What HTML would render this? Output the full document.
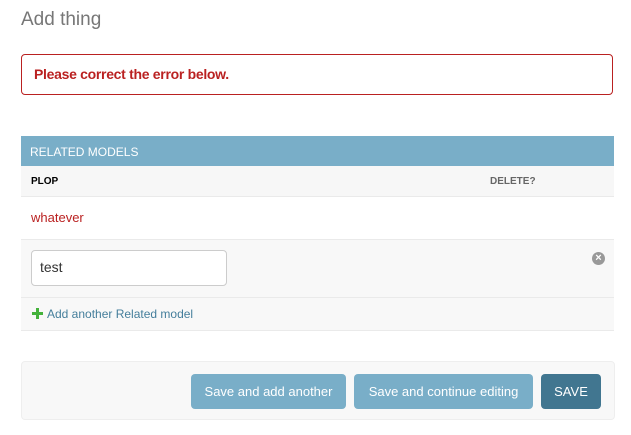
<!DOCTYPE html><html><head><style>
body{margin:0;background:#fff;font-family:"Liberation Sans",sans-serif;width:631px;height:435px;position:relative;overflow:hidden}
.a{position:absolute}
</style></head><body>
<div class="a" style="left:21px;top:9px;font-size:19px;font-weight:300;color:#777">Add thing</div>
<div class="a" style="left:21px;top:54px;width:590px;height:39px;border:1px solid #ba2121;border-radius:4px"></div>
<div class="a" style="left:34px;top:66px;font-size:14px;font-weight:bold;color:#ba2121;letter-spacing:-0.3px">Please correct the error below.</div>
<div class="a" style="left:21px;top:136px;width:593px;height:30px;background:#79aec8"></div>
<div class="a" style="left:30px;top:145px;font-size:12px;color:#fff">RELATED MODELS</div>
<div class="a" style="left:21px;top:166px;width:593px;height:30px;background:#f7f7f7;border-bottom:1px solid #eaeaea"></div>
<div class="a" style="left:31px;top:176px;font-size:10px;font-weight:bold;color:#000">PLOP</div>
<div class="a" style="left:490px;top:176px;font-size:10px;font-weight:bold;color:#666">DELETE?</div>
<div class="a" style="left:31px;top:210px;font-size:13px;color:#ba2121">whatever</div>
<div class="a" style="left:21px;top:239px;width:593px;height:57px;background:#f8f8f8;border-top:1px solid #eaeaea;border-bottom:1px solid #eaeaea"></div>
<div class="a" style="left:31px;top:250px;width:194px;height:34px;background:#fff;border:1px solid #ccc;border-radius:4px"></div>
<div class="a" style="left:40px;top:259px;font-size:14px;color:#333">test</div>
<div class="a" style="left:592px;top:252px;width:13px;height:13px;border-radius:50%;background:#999;color:#fff;font-size:11px;line-height:13px;text-align:center;font-weight:bold">×</div>
<div class="a" style="left:21px;top:298px;width:593px;height:32px;background:#f8f8f8;border-bottom:1px solid #eaeaea"></div>
<svg class="a" style="left:32px;top:308px" width="11" height="11" viewBox="0 0 11 11"><path d="M4 0h3v4h4v3h-4v4h-3v-4h-4v-3h4z" fill="#44b23b"/></svg>
<div class="a" style="left:47px;top:307px;font-size:12px;color:#447e9b">Add another Related model</div>
<div class="a" style="left:21px;top:361px;width:594px;height:59px;background:#f8f8f8;border:1px solid #eee;border-radius:4px;box-sizing:border-box"></div>
<div class="a" style="left:191px;top:374px;width:155px;height:35px;background:#79aec8;border-radius:4px;color:#fff;font-size:13px;line-height:35px;text-align:center">Save and add another</div>
<div class="a" style="left:354px;top:374px;width:179px;height:35px;background:#79aec8;border-radius:4px;color:#fff;font-size:13px;line-height:35px;text-align:center">Save and continue editing</div>
<div class="a" style="left:541px;top:374px;width:60px;height:35px;background:#417690;border-radius:4px;color:#fff;font-size:13px;line-height:35px;text-align:center">SAVE</div>
</body></html>
